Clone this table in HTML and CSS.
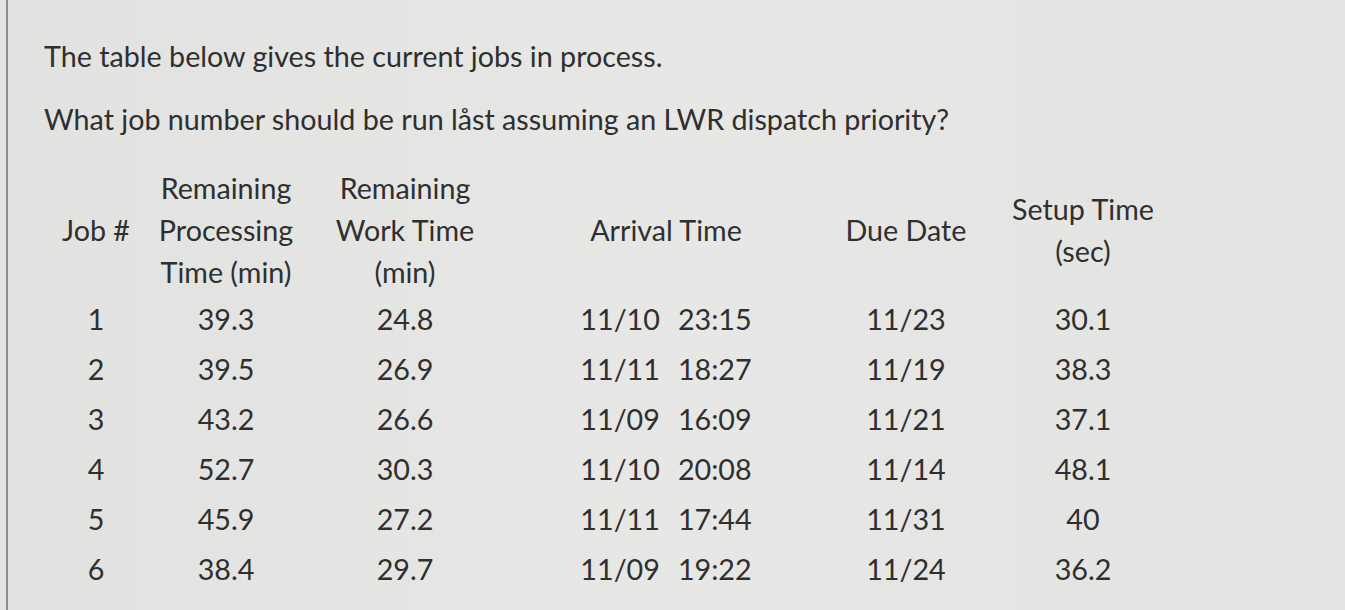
FILE: index.html
```html
<!DOCTYPE html>
<html>
<head>
<meta charset="utf-8">
<link rel="stylesheet" href="styles.css">
</head>
<body>
<div class="page">
  <p class="line">The table below gives the current jobs in process.</p>
  <p class="line">What job number should be run låst assuming an LWR dispatch priority?</p>
  <table class="jobs">
    <colgroup>
      <col class="c-job"><col class="c-proc"><col class="c-work"><col class="c-arr"><col class="c-due"><col class="c-setup">
    </colgroup>
    <thead>
      <tr>
        <th>Job #</th>
        <th>Remaining<br>Processing<br>Time (min)</th>
        <th>Remaining<br>Work Time<br>(min)</th>
        <th>Arrival Time</th>
        <th>Due Date</th>
        <th>Setup Time<br>(sec)</th>
      </tr>
    </thead>
    <tbody>
      <tr><td>1</td><td>39.3</td><td>24.8</td><td><span class="d">11/10</span><span>23:15</span></td><td>11/23</td><td>30.1</td></tr>
      <tr><td>2</td><td>39.5</td><td>26.9</td><td><span class="d">11/11</span><span>18:27</span></td><td>11/19</td><td>38.3</td></tr>
      <tr><td>3</td><td>43.2</td><td>26.6</td><td><span class="d">11/09</span><span>16:09</span></td><td>11/21</td><td>37.1</td></tr>
      <tr><td>4</td><td>52.7</td><td>30.3</td><td><span class="d">11/10</span><span>20:08</span></td><td>11/14</td><td>48.1</td></tr>
      <tr><td>5</td><td>45.9</td><td>27.2</td><td><span class="d">11/11</span><span>17:44</span></td><td>11/31</td><td>40</td></tr>
      <tr><td>6</td><td>38.4</td><td>29.7</td><td><span class="d">11/09</span><span>19:22</span></td><td>11/24</td><td>36.2</td></tr>
    </tbody>
  </table>
</div>
</body>
</html>
```
FILE: styles.css
```css
html, body {
  margin: 0;
  padding: 0;
  height: 100%;
  background: #e4e4e2;
}
body {
  font-family: Lato, "Open Sans", sans-serif;
  color: #2f2f2f;
  overflow: hidden;
}
.page {
  margin-left: 6px;
  border-left: 2px solid #8c8c8c;
  height: 100%;
  padding: 40px 0 0 36px;
  box-sizing: border-box;
  background: linear-gradient(90deg, #e2e2e0 0%, #e7e7e5 50%, #e3e3e1 100%);
}
.line {
  margin: 0 0 31px 0;
  font-size: 28.7px;
  line-height: 32px;
}
.jobs {
  border-collapse: collapse;
  table-layout: fixed;
  margin-left: 6px;
  font-size: 28.7px;
}
.c-job { width: 92px; }
.c-proc { width: 168px; }
.c-work { width: 190px; }
.c-arr { width: 332px; }
.c-due { width: 148px; }
.c-setup { width: 206px; }
.jobs th {
  font-weight: normal;
  line-height: 42px;
  height: 128px;
  padding: 0;
  vertical-align: middle;
  text-align: center;
}
.jobs td {
  padding: 0;
  height: 50px;
  line-height: 50px;
  text-align: center;
}
.jobs .d {
  margin-right: 18px;
}
```
